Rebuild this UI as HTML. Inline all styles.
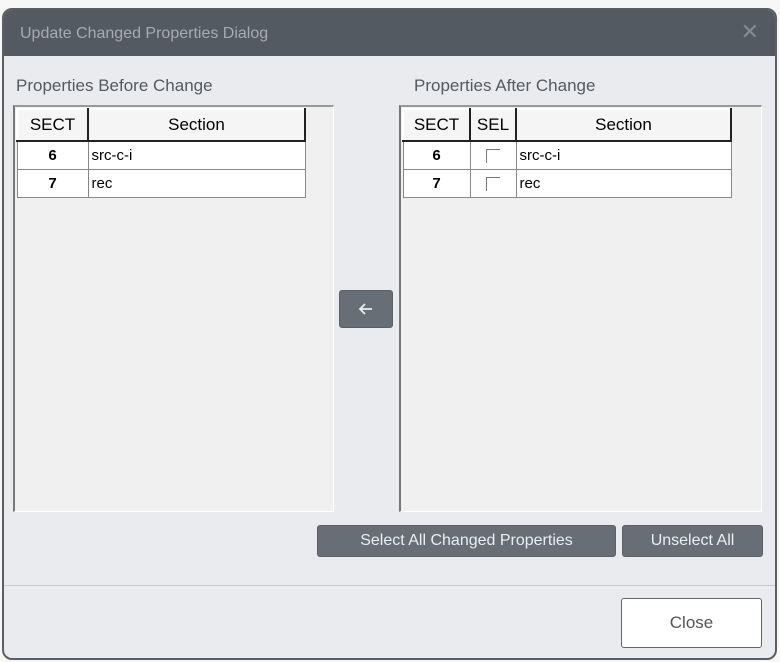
<!DOCTYPE html>
<html><head><meta charset="utf-8"><style>
*{margin:0;padding:0;box-sizing:border-box}
body{width:780px;height:662px;background:#f7f7f7;font-family:"Liberation Sans",sans-serif;position:relative;overflow:hidden}
.dlg{position:absolute;left:2px;top:8px;width:775px;height:652px;background:#eaebee;border:2px solid #5a5f66;border-radius:10px;overflow:hidden}
.tb{position:absolute;left:0;top:0;right:0;height:46px;background:#545a61}
.tt{position:absolute;left:16px;top:15px;font-size:16px;color:#a7abb0}
.x{position:absolute;right:16px;top:14px;font-size:22px;color:#868b91;line-height:16px}
.lbl{position:absolute;font-size:17px;color:#555a60}
.pane{position:absolute;background:#f0f0f0;border-left:2px solid #777;border-top:2px solid #999;border-right:1px solid #fff;border-bottom:1px solid #fff}
table{position:absolute;left:1px;top:1px;border-collapse:collapse;font-size:15px;color:#000}
td{border:1px solid #888;background:#fff;height:28px;padding:0 3px}
td.c{font-weight:bold}
th{font-weight:normal;font-size:17px;background:#f5f5f5;border-top:2px solid #fff;border-left:2px solid #fff;border-right:2px solid #222;border-bottom:2px solid #222;height:32px}
.c{text-align:center}
.cb{display:inline-block;width:14px;height:14px;border-left:1px solid #777;border-top:1px solid #777;background:#fff;vertical-align:middle}
.btn{position:absolute;background:#676e76;color:#eceef0;border-radius:3px;font-size:16px;text-align:center;border:1px solid #5a6168}
.sep{position:absolute;left:0;right:0;top:575px;height:1px;background:#c9cbce}
.close{position:absolute;left:617px;top:588px;width:141px;height:50px;background:#fff;border:1px solid #666;border-radius:3px;font-size:17px;color:#555;text-align:center;line-height:48px}
</style></head><body>
<div class="dlg">
<div class="tb"><div class="tt">Update Changed Properties Dialog</div><div class="x">✕</div></div>
<div class="lbl" style="left:12px;top:66px">Properties Before Change</div>
<div class="lbl" style="left:410px;top:66px">Properties After Change</div>
<div class="pane" style="left:9px;top:95px;width:321px;height:407px">
<table style="width:290px"><tr><th style="width:71px">SECT</th><th>Section</th></tr>
<tr><td class="c">6</td><td>src-c-i</td></tr><tr><td class="c">7</td><td>rec</td></tr></table></div>
<div class="pane" style="left:395px;top:95px;width:363px;height:407px">
<table style="width:330px"><tr><th style="width:67px">SECT</th><th style="width:46px">SEL</th><th>Section</th></tr>
<tr><td class="c" style="height:26px">6</td><td class="c" style="font-weight:normal"><span class="cb"></span></td><td>src-c-i</td></tr><tr><td class="c" style="height:27px">7</td><td class="c" style="font-weight:normal"><span class="cb"></span></td><td>rec</td></tr></table></div>
<div class="btn" style="left:335px;top:280px;width:54px;height:38px">
<svg width="52" height="36" viewBox="0 0 52 36"><path d="M20 18H32M25 13L20 18L25 23" stroke="#eceef0" stroke-width="1.8" fill="none"/></svg></div>
<div class="btn" style="left:313px;top:515px;width:299px;height:32px;line-height:30px">Select All Changed Properties</div>
<div class="btn" style="left:618px;top:515px;width:141px;height:32px;line-height:30px">Unselect All</div>
<div class="sep"></div>
<div class="close">Close</div>
</div>
</body></html>
